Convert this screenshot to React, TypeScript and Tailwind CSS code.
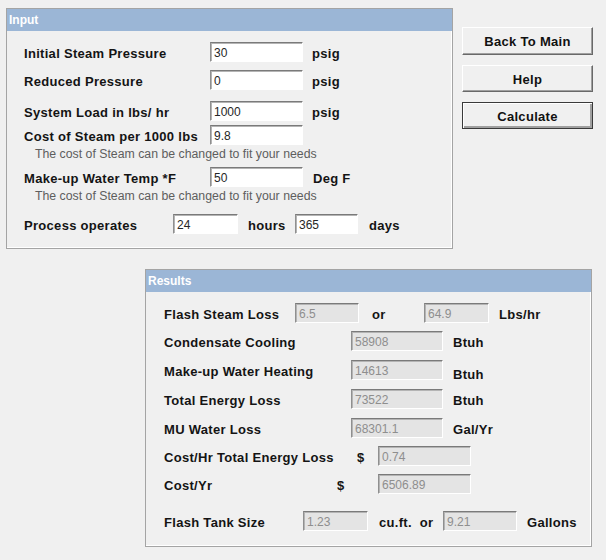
import React from 'react';

// Flash steam loss calculator — classic Win32 style form

function Field({ value, className = '', disabled = false }: { value: string; className?: string; disabled?: boolean }) {
  return (
    <div
      className={`flex h-[20px] shrink-0 items-center border border-t-[#7a7a7a] border-l-[#8f8f8f] border-r-white border-b-white pl-[3px] pt-[1px] text-[12px] leading-none shadow-[inset_1px_1px_0_#b4b4b4] ${
        disabled ? 'bg-[#e4e4e4] text-[#8e8e8e]' : 'bg-white text-[#262626]'
      } ${className}`}
    >
      {value}
    </div>
  );
}

function Panel({ title, className = '', children }: { title: string; className?: string; children: React.ReactNode }) {
  return (
    <div className={`flex flex-col border border-[#a4a4a4] shadow-[inset_-1px_-1px_0_#ffffff] ${className}`}>
      <div className="flex h-[22px] items-center bg-[#9bb6d6] pl-[2px] text-[12px] font-bold text-white">{title}</div>
      {children}
    </div>
  );
}

function Btn({ label, def = false, className = '' }: { label: string; def?: boolean; className?: string }) {
  return (
    <button
      className={`flex w-[131px] items-center justify-center bg-[#f0f0f0] pt-[2px] text-[13px] font-bold tracking-[0.3px] text-[#111] ${
        def
          ? 'border border-[#3a3a3a] shadow-[inset_1px_1px_0_#ffffff,inset_-2px_-2px_0_#a0a0a0]'
          : 'border border-t-white border-l-white border-b-[#696969] border-r-[#696969] shadow-[inset_-1px_-1px_0_#a0a0a0]'
      } ${className}`}
    >
      {label}
    </button>
  );
}

const lbl = 'shrink-0 pt-[4px] text-[13px] font-bold tracking-[0.3px] text-[#141414]';
const note = 'pl-[11px] text-[12.3px] leading-[14px] text-[#5e5e5e]';

export default function App() {
  return (
    <div
      className="h-[560px] w-[606px] overflow-hidden bg-[#f0f0f0] pl-[6px] pt-[8px]"
      style={{ fontFamily: '"Liberation Sans", Arial, sans-serif' }}
    >
      <div className="flex">
        <Panel title="Input" className="h-[241px] w-[447px]">
          <div className="flex flex-col pl-[17px]">
            <div className="mt-[11px] flex h-[20px] items-center">
              <span className={`${lbl} w-[186px]`}>Initial Steam Pressure</span>
              <Field value="30" className="w-[93px]" />
              <span className={`${lbl} ml-[9px]`}>psig</span>
            </div>
            <div className="mt-[8px] flex h-[20px] items-center">
              <span className={`${lbl} w-[186px]`}>Reduced Pressure</span>
              <Field value="0" className="w-[93px]" />
              <span className={`${lbl} ml-[9px]`}>psig</span>
            </div>
            <div className="mt-[11px] flex h-[20px] items-center">
              <span className={`${lbl} w-[186px]`}>System Load in lbs/ hr</span>
              <Field value="1000" className="w-[93px]" />
              <span className={`${lbl} ml-[9px]`}>psig</span>
            </div>
            <div className="mt-[4px] flex h-[20px] items-center">
              <span className={`${lbl} w-[186px]`}>Cost of Steam per 1000 lbs</span>
              <Field value="9.8" className="w-[93px]" />
            </div>
            <div className={`mt-[2px] ${note}`}>The cost of Steam can be changed to fit your needs</div>
            <div className="mt-[6px] flex h-[20px] items-center">
              <span className={`${lbl} w-[186px]`}>Make-up Water Temp *F</span>
              <Field value="50" className="w-[93px]" />
              <span className={`${lbl} ml-[10px]`}>Deg F</span>
            </div>
            <div className={`mt-[2px] ${note}`}>The cost of Steam can be changed to fit your needs</div>
            <div className="mt-[11px] flex h-[20px] items-center">
              <span className={`${lbl} w-[149px]`}>Process operates</span>
              <Field value="24" className="w-[65px]" />
              <span className={`${lbl} ml-[10px] w-[47px]`}>hours</span>
              <Field value="365" className="w-[63px]" />
              <span className={`${lbl} ml-[11px]`}>days</span>
            </div>
          </div>
        </Panel>

        <div className="ml-[9px] mt-[19px] flex flex-col">
          <Btn label="Back To Main" className="h-[28px]" />
          <Btn label="Help" className="mt-[10px] h-[27px]" />
          <Btn label="Calculate" def className="mt-[10px] h-[27px]" />
        </div>
      </div>

      <Panel title="Results" className="ml-[139px] mt-[20px] h-[278px] w-[447px]">
        <div className="flex flex-col pl-[18px]">
          <div className="mt-[11px] flex h-[20px] items-center">
            <span className={`${lbl} w-[131px]`}>Flash Steam Loss</span>
            <Field value="6.5" disabled className="w-[64px]" />
            <span className={`${lbl} ml-[13px] w-[52px]`}>or</span>
            <Field value="64.9" disabled className="w-[65px]" />
            <span className={`${lbl} ml-[10px]`}>Lbs/hr</span>
          </div>
          <div className="mt-[8px] flex h-[20px] items-center">
            <span className={`${lbl} w-[187px]`}>Condensate Cooling</span>
            <Field value="58908" disabled className="w-[92px]" />
            <span className={`${lbl} ml-[10px]`}>Btuh</span>
          </div>
          <div className="mt-[9px] flex h-[20px] items-center">
            <span className={`${lbl} w-[187px]`}>Make-up Water Heating</span>
            <Field value="14613" disabled className="w-[92px]" />
            <span className={`${lbl} ml-[10px] mt-[6px]`}>Btuh</span>
          </div>
          <div className="mt-[9px] flex h-[20px] items-center">
            <span className={`${lbl} w-[187px]`}>Total Energy Loss</span>
            <Field value="73522" disabled className="w-[92px]" />
            <span className={`${lbl} ml-[10px]`}>Btuh</span>
          </div>
          <div className="mt-[9px] flex h-[20px] items-center">
            <span className={`${lbl} w-[187px]`}>MU Water Loss</span>
            <Field value="68301.1" disabled className="w-[92px]" />
            <span className={`${lbl} ml-[10px]`}>Gal/Yr</span>
          </div>
          <div className="mt-[8px] flex h-[20px] items-center">
            <span className={`${lbl} w-[193px]`}>Cost/Hr Total Energy Loss</span>
            <span className={`${lbl} w-[21px]`}>$</span>
            <Field value="0.74" disabled className="w-[93px]" />
          </div>
          <div className="mt-[8px] flex h-[20px] items-center">
            <span className={`${lbl} w-[173px]`}>Cost/Yr</span>
            <span className={`${lbl} w-[41px]`}>$</span>
            <Field value="6506.89" disabled className="w-[93px]" />
          </div>
          <div className="mt-[17px] flex h-[20px] items-center">
            <span className={`${lbl} w-[139px]`}>Flash Tank Size</span>
            <Field value="1.23" disabled className="w-[65px]" />
            <span className={`${lbl} ml-[11px] w-[64px]`}>cu.ft.&nbsp;&nbsp;or</span>
            <Field value="9.21" disabled className="w-[74px]" />
            <span className={`${lbl} ml-[10px]`}>Gallons</span>
          </div>
        </div>
      </Panel>
    </div>
  );
}
